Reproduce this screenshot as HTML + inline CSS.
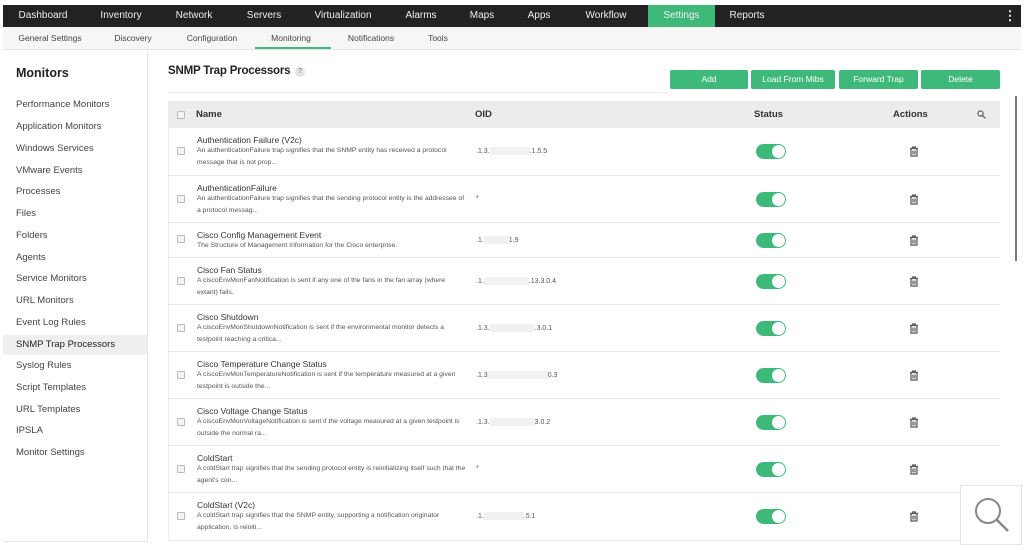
<!DOCTYPE html>
<html><head><style>
*{box-sizing:border-box;margin:0;padding:0}
body{width:1024px;height:550px;background:#fff;font-family:"Liberation Sans",sans-serif;position:relative;overflow:hidden;color:#333}
.top{position:absolute;left:3px;top:5px;width:1018px;height:22px;background:#222}
.top span{position:absolute;top:0;line-height:22px;font-size:10px;color:#eee;transform:translateX(-50%)}
.top .act{background:#3fb97a;width:67px;left:645px;height:22px;text-align:center;transform:none}
.sub{position:absolute;left:3px;top:27px;width:1018px;height:23px;background:#f6f6f6;border-bottom:1px solid #e6e6e6}
.sub span{position:absolute;top:0;line-height:22px;font-size:8.5px;color:#444;transform:translateX(-50%)}
.side{position:absolute;left:3px;top:51px;width:145px;height:491px;border-right:1px solid #e5e5e5;border-bottom:1px solid #e5e5e5;background:#fff}
.side h2{position:absolute;left:13px;top:15px;font-size:12.5px;font-weight:bold;color:#222}
.side div{position:absolute;left:0;width:144px;height:20px;line-height:20px;padding-left:13px;font-size:9.5px;color:#444}
.side .hl{background:#efefef;color:#222}
h1{position:absolute;left:168px;top:65px;font-size:11.5px;font-weight:bold;color:#222;letter-spacing:-0.2px}
.q{position:absolute;left:295px;top:67px;width:10px;height:10px;border-radius:50%;background:#e3e3e3;font-size:7px;text-align:center;line-height:10px;color:#777}
.hr{position:absolute;left:168px;top:92px;width:500px;height:1px;background:#eee}
.btn{position:absolute;top:70px;height:19px;background:#3fb97a;color:#fff;font-size:8.5px;line-height:19px;text-align:center;border-radius:2px}
.th{position:absolute;left:168px;top:101px;width:832px;height:27px;background:#ececec;font-size:9.5px;font-weight:bold;color:#333}
.th span{position:absolute;line-height:27px}
.cb{position:absolute;width:8px;height:8px;border:1px solid #bbb;background:#f4f4f4;border-radius:1px}
.row{position:absolute;left:168px;width:832px;border-bottom:1px solid #e8e8e8;border-left:1px solid #eee}
.row .n{position:absolute;left:28px;font-size:8.5px;color:#333}
.row .d{position:absolute;left:28px;width:270px;font-size:6.8px;color:#555;line-height:12px}
.row .o{position:absolute;left:307px;font-size:7px;color:#555}
.row .o i{display:inline-block;width:40px;height:8px;background:#f1f1f1;vertical-align:middle}
.tg{position:absolute;left:587px;width:30px;height:15px;border-radius:8px;background:#3fb97a}
.tg:after{content:"";position:absolute;right:1px;top:1px;width:13px;height:13px;border-radius:50%;background:#fff}
.tr{position:absolute;left:740px}
.sb{position:absolute;left:1015px;top:96px;width:2px;height:165px;background:#777}
.mag{position:absolute;left:960px;top:485px;width:62px;height:60px;background:#fff;border:1px solid #e5e5e5}
</style></head><body>
<svg width="0" height="0" style="position:absolute"><defs><symbol id="t" viewBox="0 0 10 11"><path d="M1 2.5H9M3.5 2.5V1H6.5V2.5M2 2.5V10H8V2.5M4 4.5V8.5M6 4.5V8.5" fill="none" stroke="#555" stroke-width="1.2"/></symbol></defs></svg>
<div class="top">
<span style="left:40px">Dashboard</span><span style="left:118px">Inventory</span><span style="left:191px">Network</span><span style="left:261px">Servers</span><span style="left:340px">Virtualization</span><span style="left:418px">Alarms</span><span style="left:479px">Maps</span><span style="left:536px">Apps</span><span style="left:603px">Workflow</span><span class="act">Settings</span><span style="left:744px">Reports</span>
<span style="left:1007px;font-weight:bold;font-size:13px">&#8942;</span>
</div>
<div class="sub">
<span style="left:47px">General Settings</span><span style="left:130px">Discovery</span><span style="left:209px">Configuration</span><span style="left:288px">Monitoring</span><span style="left:368px">Notifications</span><span style="left:435px">Tools</span>
<div style="position:absolute;left:252px;top:20px;width:76px;height:2px;background:#3fb97a"></div>
</div>
<div class="side"><h2>Monitors</h2>
<div style="top:44px">Performance Monitors</div><div style="top:66px">Application Monitors</div><div style="top:88px">Windows Services</div><div style="top:110px">VMware Events</div><div style="top:131px">Processes</div><div style="top:153px">Files</div><div style="top:175px">Folders</div><div style="top:197px">Agents</div><div style="top:218px">Service Monitors</div><div style="top:240px">URL Monitors</div><div style="top:262px">Event Log Rules</div><div class="hl" style="top:284px">SNMP Trap Processors</div><div style="top:305px">Syslog Rules</div><div style="top:327px">Script Templates</div><div style="top:349px">URL Templates</div><div style="top:370px">IPSLA</div><div style="top:392px">Monitor Settings</div>
</div>
<h1>SNMP Trap Processors</h1><div class="q">?</div><div class="hr"></div>
<div class="btn" style="left:670px;width:78px">Add</div>
<div class="btn" style="left:751px;width:84px">Load From Mibs</div>
<div class="btn" style="left:839px;width:79px">Forward Trap</div>
<div class="btn" style="left:921px;width:79px">Delete</div>
<div class="th"><div class="cb" style="left:9px;top:10px"></div><span style="left:28px">Name</span><span style="left:307px">OID</span><span style="left:586px">Status</span><span style="left:725px">Actions</span>
<svg style="position:absolute;left:809px;top:9px" width="9" height="9" viewBox="0 0 9 9"><circle cx="3.5" cy="3.5" r="2.6" fill="none" stroke="#555" stroke-width="1.1"/><line x1="5.4" y1="5.4" x2="8.3" y2="8.3" stroke="#555" stroke-width="1.3"/></svg></div>

<div class="row" style="top:128px;height:48px"><div class="cb" style="left:8px;top:19px"></div><div class="n" style="top:7px">Authentication Failure (V2c)</div><div class="d" style="top:17px">An authenticationFailure trap signifies that the SNMP entity has received a protocol message that is not prop...</div><div class="o" style="top:19px">.1.3.<i></i>.1.5.5</div><div class="tg" style="top:16px"></div><svg class="tr" style="top:18px" width="10" height="11"><use href="#t"/></svg></div>
<div class="row" style="top:176px;height:47px"><div class="cb" style="left:8px;top:19px"></div><div class="n" style="top:7px">AuthenticationFailure</div><div class="d" style="top:17px">An authenticationFailure trap signifies that the sending protocol entity is the addressee of a protocol messag...</div><div class="o" style="top:19px">*</div><div class="tg" style="top:16px"></div><svg class="tr" style="top:18px" width="10" height="11"><use href="#t"/></svg></div>
<div class="row" style="top:223px;height:35px"><div class="cb" style="left:8px;top:12px"></div><div class="n" style="top:7px">Cisco Config Management Event</div><div class="d" style="top:17px">The Structure of Management Information for the Cisco enterprise.</div><div class="o" style="top:13px">.1.<i style="width:25px"></i>1.9</div><div class="tg" style="top:10px"></div><svg class="tr" style="top:12px" width="10" height="11"><use href="#t"/></svg></div>
<div class="row" style="top:258px;height:47px"><div class="cb" style="left:8px;top:19px"></div><div class="n" style="top:7px">Cisco Fan Status</div><div class="d" style="top:17px">A ciscoEnvMonFanNotification is sent if any one of the fans in the fan array (where extant) fails.</div><div class="o" style="top:19px">.1.<i style="width:45px"></i>.13.3.0.4</div><div class="tg" style="top:16px"></div><svg class="tr" style="top:18px" width="10" height="11"><use href="#t"/></svg></div>
<div class="row" style="top:305px;height:47px"><div class="cb" style="left:8px;top:19px"></div><div class="n" style="top:7px">Cisco Shutdown</div><div class="d" style="top:17px">A ciscoEnvMonShutdownNotification is sent if the environmental monitor detects a testpoint reaching a critica...</div><div class="o" style="top:19px">.1.3.<i style="width:45px"></i>.3.0.1</div><div class="tg" style="top:16px"></div><svg class="tr" style="top:18px" width="10" height="11"><use href="#t"/></svg></div>
<div class="row" style="top:352px;height:47px"><div class="cb" style="left:8px;top:19px"></div><div class="n" style="top:7px">Cisco Temperature Change Status</div><div class="d" style="top:17px">A ciscoEnvMonTemperatureNotification is sent if the temperature measured at a given testpoint is outside the...</div><div class="o" style="top:19px">.1.3<i style="width:60px"></i>0.3</div><div class="tg" style="top:16px"></div><svg class="tr" style="top:18px" width="10" height="11"><use href="#t"/></svg></div>
<div class="row" style="top:399px;height:47px"><div class="cb" style="left:8px;top:19px"></div><div class="n" style="top:7px">Cisco Voltage Change Status</div><div class="d" style="top:17px">A ciscoEnvMonVoltageNotification is sent if the voltage measured at a given testpoint is outside the normal ra...</div><div class="o" style="top:19px">.1.3.<i style="width:45px"></i>3.0.2</div><div class="tg" style="top:16px"></div><svg class="tr" style="top:18px" width="10" height="11"><use href="#t"/></svg></div>
<div class="row" style="top:446px;height:47px"><div class="cb" style="left:8px;top:19px"></div><div class="n" style="top:7px">ColdStart</div><div class="d" style="top:17px">A coldStart trap signifies that the sending protocol entity is reinitializing itself such that the agent's con...</div><div class="o" style="top:19px">*</div><div class="tg" style="top:16px"></div><svg class="tr" style="top:18px" width="10" height="11"><use href="#t"/></svg></div>
<div class="row" style="top:493px;height:48px"><div class="cb" style="left:8px;top:19px"></div><div class="n" style="top:7px">ColdStart (V2c)</div><div class="d" style="top:17px">A coldStart trap signifies that the SNMP entity, supporting a notification originator application, is reiniti...</div><div class="o" style="top:19px">.1.<i></i>.5.1</div><div class="tg" style="top:16px"></div><svg class="tr" style="top:18px" width="10" height="11"><use href="#t"/></svg></div>
<div class="sb"></div>
<div class="mag"><svg width="60" height="58" viewBox="0 0 60 58"><circle cx="27" cy="25" r="12" fill="none" stroke="#888" stroke-width="2"/><line x1="36" y1="34" x2="47" y2="45" stroke="#888" stroke-width="2.5"/></svg></div>
</body></html>
